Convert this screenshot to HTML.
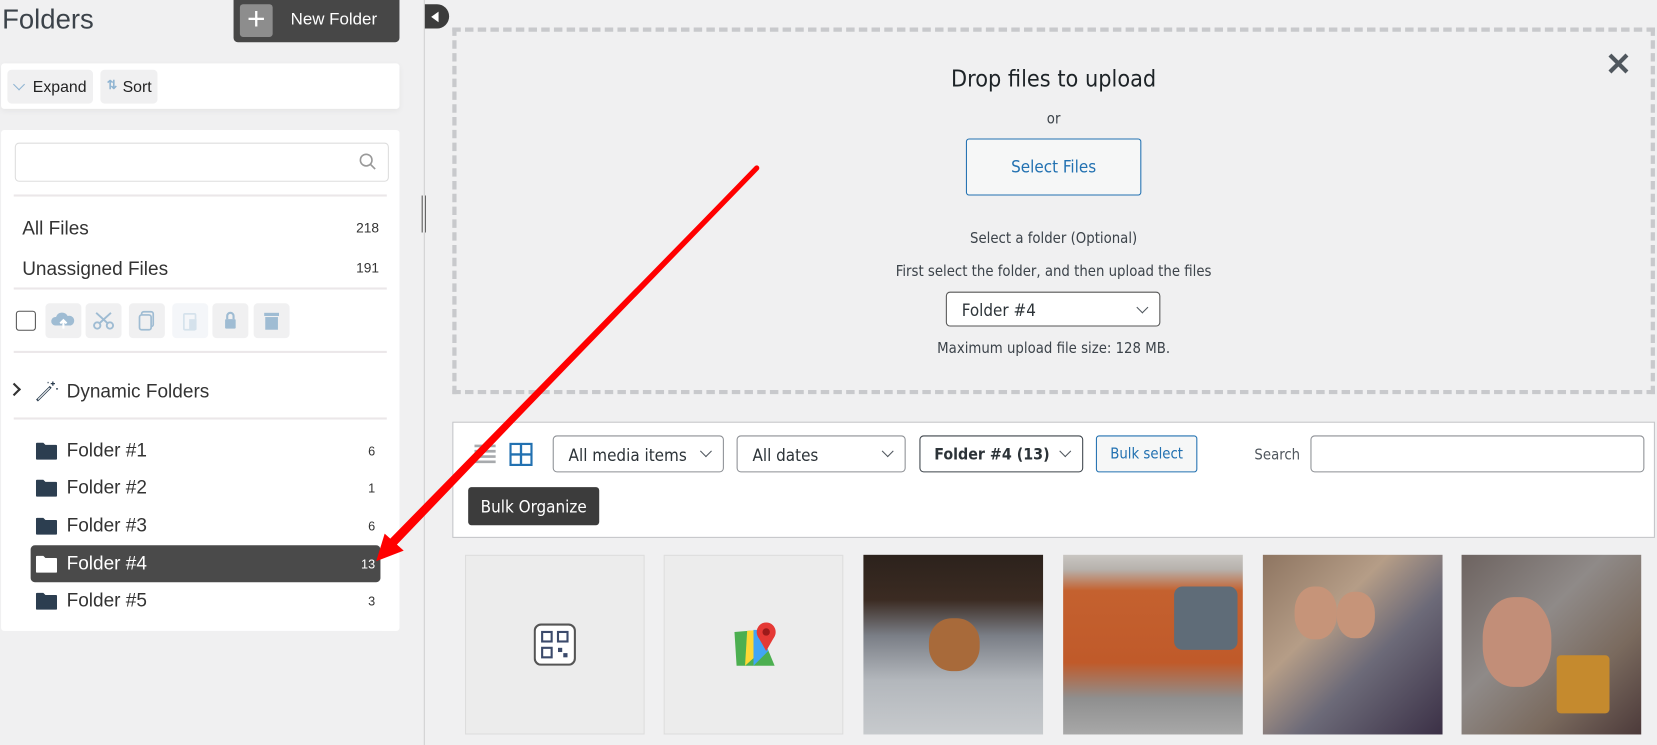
<!DOCTYPE html>
<html><head><meta charset="utf-8"><style>
html,body{margin:0;padding:0;width:1657px;height:745px;overflow:hidden;background:#f0f0f1;}
#w{position:absolute;left:0;top:0;width:1568px;height:705px;transform:scale(1.0568);transform-origin:0 0;font-family:"Liberation Sans",sans-serif;color:#3c434a;}
.a{position:absolute;}
.card{background:#fff;border-radius:3px;}
.hr{position:absolute;height:2px;background:#ebe7e9;}
.ib{position:absolute;top:287px;width:34px;height:33px;background:#f0f0f1;border-radius:4px;}
.fr{position:absolute;left:29px;width:331px;height:35px;}
.fr .t{position:absolute;left:34px;top:7px;font-size:18px;color:#333;}
.fr .n{position:absolute;right:5px;top:11px;font-size:12px;color:#333;}
.fr svg{position:absolute;left:5px;top:9px;}
.sel{position:absolute;height:33px;border:1px solid #8c8f94;border-radius:4px;background:#fff;font-size:16px;font-family:"DejaVu Sans Condensed","Liberation Sans",sans-serif;box-sizing:border-box;padding:8px 14px;color:#2c3338;}
.sel:after{content:"";position:absolute;right:12px;top:10px;width:7px;height:7px;border-right:1.8px solid #50575e;border-bottom:1.8px solid #50575e;transform:rotate(45deg);}
.th{position:absolute;top:525px;width:170px;height:170px;}
.wc{font-family:"DejaVu Sans Condensed","Liberation Sans",sans-serif;}
</style></head><body><div id="w">
<div class="a" style="left:2px;top:3px;font-size:26px;color:#3c434a">Folders</div>
<div class="a" style="left:221px;top:0;width:157px;height:40px;background:#474747;border-radius:0 0 4px 4px"></div>
<div class="a" style="left:227px;top:4px;width:31px;height:31px;background:#8d8d8d;border-radius:3px;color:#fff;font-size:30px;line-height:30px;text-align:center">+</div>
<div class="a" style="left:275px;top:10px;color:#fff;font-size:16px">New Folder</div>

<div class="a card" style="left:1px;top:60px;width:377px;height:43px;box-shadow:0 2px 6px rgba(0,0,0,.05)"></div>
<div class="a" style="left:7px;top:66px;width:81px;height:32px;background:#f0f0f1;border-radius:4px"></div>
<div class="a" style="left:14px;top:76px;width:7px;height:7px;border-right:1.5px solid #8fb4d2;border-bottom:1.5px solid #8fb4d2;transform:rotate(45deg)"></div>
<div class="a" style="left:31px;top:74px;font-size:15px;color:#222">Expand</div>
<div class="a" style="left:95px;top:66px;width:54px;height:32px;background:#f0f0f1;border-radius:4px"></div>
<div class="a" style="left:101px;top:73px;font-size:12px;color:#8fb4d2;font-weight:bold">⇅</div>
<div class="a" style="left:116px;top:74px;font-size:15px;color:#222">Sort</div>

<div class="a card" style="left:1px;top:123px;width:377px;height:474px"></div>
<div class="a" style="left:14px;top:135px;width:352px;height:35px;border:1px solid #ddd;border-radius:4px"></div>
<svg class="a" style="left:339px;top:144px" width="18" height="18"><circle cx="7.5" cy="7.5" r="5.5" fill="none" stroke="#999" stroke-width="1.5"/><path d="M11.5 11.5L16 16" stroke="#999" stroke-width="1.6"/></svg>
<div class="hr" style="left:13px;top:184px;width:353px"></div>
<div class="a" style="left:21px;top:206px;font-size:18px;color:#333">All Files</div>
<div class="a" style="left:337px;top:208px;font-size:13px;color:#333">218</div>
<div class="a" style="left:21px;top:244px;font-size:18px;color:#333">Unassigned Files</div>
<div class="a" style="left:337px;top:246px;font-size:13px;color:#333">191</div>
<div class="hr" style="left:13px;top:272px;width:353px"></div>
<div class="a" style="left:15px;top:294px;width:17px;height:17px;border:1.3px solid #555;border-radius:3px;background:#fff"></div>
<div class="ib" style="left:43px"><svg width="34" height="33"><path d="M9 21a4 4 0 0 1 1-8a6 6 0 0 1 11-1a4.5 4.5 0 0 1 3 9z" fill="#9fbcd3"/><path d="M17 24v-8m-3 3l3-3 3 3" stroke="#fff" stroke-width="2" fill="none"/></svg></div>
<div class="ib" style="left:81px"><svg width="34" height="33"><circle cx="11" cy="21" r="3" fill="none" stroke="#9fbcd3" stroke-width="1.8"/><circle cx="23" cy="21" r="3" fill="none" stroke="#9fbcd3" stroke-width="1.8"/><path d="M13 19L24 9M21 19L10 9" stroke="#9fbcd3" stroke-width="1.8"/></svg></div>
<div class="ib" style="left:122px"><svg width="34" height="33"><rect x="12" y="8" width="11" height="14" rx="2" fill="none" stroke="#9fbcd3" stroke-width="1.6"/><rect x="10" y="11" width="11" height="14" rx="2" fill="#f0f0f1" stroke="#9fbcd3" stroke-width="1.6"/></svg></div>
<div class="ib" style="left:163px;background:#f4f6f9"><svg width="34" height="33"><rect x="11" y="10" width="11" height="15" rx="1" fill="none" stroke="#d5e2ec" stroke-width="1.6"/><rect x="16" y="15" width="7" height="10" fill="#d5e2ec"/></svg></div>
<div class="ib" style="left:201px"><svg width="34" height="33"><rect x="12" y="15" width="10" height="9" rx="1" fill="#9fbcd3"/><path d="M14 15v-3a3 3 0 0 1 6 0v3" fill="none" stroke="#9fbcd3" stroke-width="2"/></svg></div>
<div class="ib" style="left:240px"><svg width="34" height="33"><rect x="10" y="9" width="14" height="3" fill="#9fbcd3"/><rect x="11" y="13" width="12" height="12" fill="#9fbcd3"/></svg></div>
<div class="hr" style="left:13px;top:332px;width:353px"></div>
<div class="a" style="left:9px;top:364px;width:7px;height:7px;border-right:2px solid #333;border-bottom:2px solid #333;transform:rotate(-45deg)"></div>
<svg class="a" style="left:33px;top:359px" width="22" height="22"><path d="M2 20L15 7" stroke="#2c3e50" stroke-width="2.5"/><path d="M3 19L14 8" stroke="#fff" stroke-width="1"/><path d="M17 2v4M15 4h4M20 9h2M12 3h1" stroke="#2c3e50" stroke-width="1.2"/></svg>
<div class="a" style="left:63px;top:360px;font-size:18px;color:#333">Dynamic Folders</div>
<div class="hr" style="left:13px;top:395px;width:353px"></div>

<div class="fr" style="top:409px"><svg width="20" height="17"><path d="M0 2a1 1 0 0 1 1-1h6l2 2h10a1 1 0 0 1 1 1v12a1 1 0 0 1-1 1H1a1 1 0 0 1-1-1z" fill="#2c3e50"/></svg><span class="t">Folder #1</span><span class="n">6</span></div>
<div class="fr" style="top:444px"><svg width="20" height="17"><path d="M0 2a1 1 0 0 1 1-1h6l2 2h10a1 1 0 0 1 1 1v12a1 1 0 0 1-1 1H1a1 1 0 0 1-1-1z" fill="#2c3e50"/></svg><span class="t">Folder #2</span><span class="n">1</span></div>
<div class="fr" style="top:480px"><svg width="20" height="17"><path d="M0 2a1 1 0 0 1 1-1h6l2 2h10a1 1 0 0 1 1 1v12a1 1 0 0 1-1 1H1a1 1 0 0 1-1-1z" fill="#2c3e50"/></svg><span class="t">Folder #3</span><span class="n">6</span></div>
<div class="fr" style="top:516px;background:#4a4a4a;border-radius:4px"><svg width="20" height="17"><path d="M0 2a1 1 0 0 1 1-1h6l2 2h10a1 1 0 0 1 1 1v12a1 1 0 0 1-1 1H1a1 1 0 0 1-1-1z" fill="#fff"/></svg><span class="t" style="color:#fff">Folder #4</span><span class="n" style="color:#fff">13</span></div>
<div class="fr" style="top:551px"><svg width="20" height="17"><path d="M0 2a1 1 0 0 1 1-1h6l2 2h10a1 1 0 0 1 1 1v12a1 1 0 0 1-1 1H1a1 1 0 0 1-1-1z" fill="#2c3e50"/></svg><span class="t">Folder #5</span><span class="n">3</span></div>

<div class="a" style="left:401px;top:0;width:1px;height:705px;background:#d0d0d0"></div>
<div class="a" style="left:399px;top:185px;width:4px;height:35px;border-left:1px solid #555;border-right:1px solid #555;box-sizing:border-box;background:#f0f0f1"></div>
<div class="a" style="left:402px;top:4px;width:23px;height:23px;background:#3c3c3c;border-radius:0 12px 12px 0"></div>
<div class="a" style="left:408px;top:11px;width:0;height:0;border-top:5px solid transparent;border-bottom:5px solid transparent;border-right:7px solid #fff"></div>

<div class="a" style="left:428px;top:26px;width:1138px;height:347px;border:4px dashed #c8c9cc;box-sizing:border-box"></div>
<div class="a" style="left:1519px;top:44px;font-size:30px;color:#50575e;font-weight:bold">✕</div>
<div class="a wc" style="left:697px;width:600px;top:63px;text-align:center;font-size:22px;color:#1d2327">Drop files to upload</div>
<div class="a wc" style="left:697px;width:600px;top:105px;text-align:center;font-size:14px">or</div>
<div class="a wc" style="left:914px;top:131px;width:166px;height:54px;border:1px solid #2271b1;border-radius:3px;background:#f6f7f7;box-sizing:border-box;text-align:center;line-height:52px;font-size:16px;color:#2271b1">Select Files</div>
<div class="a wc" style="left:697px;width:600px;top:218px;text-align:center;font-size:14px">Select a folder (Optional)</div>
<div class="a wc" style="left:697px;width:600px;top:249px;text-align:center;font-size:14px">First select the folder, and then upload the files</div>
<div class="sel" style="left:895px;top:276px;width:203px;border-color:#555;padding:7px 14px">Folder #4</div>
<div class="a wc" style="left:697px;width:600px;top:322px;text-align:center;font-size:14px">Maximum upload file size: 128 MB.</div>

<div class="a" style="left:428px;top:399px;width:1138px;height:110px;background:#fff;border:1px solid #c3c4c7;box-sizing:border-box"></div>
<svg class="a" style="left:448px;top:419px" width="22" height="22"><path d="M1 3h20M1 8h20M1 13h20M1 18h20" stroke="#a7aaad" stroke-width="2.5"/></svg>
<svg class="a" style="left:482px;top:419px" width="22" height="22"><rect x="1" y="1" width="20" height="20" fill="none" stroke="#2271b1" stroke-width="2.2"/><path d="M11 1v20M1 11h20" stroke="#2271b1" stroke-width="2.2"/></svg>
<div class="sel" style="left:523px;top:412px;width:162px;height:35px">All media items</div>
<div class="sel" style="left:697px;top:412px;width:160px;height:35px">All dates</div>
<div class="sel" style="left:870px;top:412px;width:155px;height:35px;border-color:#3c434a;font-weight:bold;padding-left:13px;font-size:15px">Folder #4 (13)</div>
<div class="a wc" style="left:1037px;top:412px;width:96px;height:35px;border:1px solid #2271b1;border-radius:3px;background:#f6f7f7;box-sizing:border-box;text-align:center;line-height:35px;font-size:14px;color:#2271b1">Bulk select</div>
<div class="a wc" style="left:1187px;top:423px;font-size:14px;color:#50575e">Search</div>
<div class="a" style="left:1240px;top:412px;width:316px;height:35px;border:1px solid #8c8f94;border-radius:4px;box-sizing:border-box"></div>
<div class="a wc" style="left:443px;top:461px;width:124px;height:36px;background:#3c3c3c;border-radius:3px;color:#fff;font-size:16px;text-align:center;line-height:37px">Bulk Organize</div>

<div class="th" style="left:440px;background:#ececec;border:1px solid #ddd;box-sizing:border-box"><svg style="position:absolute;left:64px;top:64px" width="40" height="40"><rect x="1" y="1" width="38" height="38" rx="6" fill="#fff" stroke="#555" stroke-width="2"/><rect x="8" y="8" width="9" height="9" fill="none" stroke="#3b4a6b" stroke-width="2"/><rect x="23" y="8" width="9" height="9" fill="none" stroke="#3b4a6b" stroke-width="2"/><rect x="8" y="23" width="9" height="9" fill="none" stroke="#3b4a6b" stroke-width="2"/><rect x="23" y="23" width="4" height="4" fill="#3b4a6b"/><rect x="28" y="28" width="4" height="4" fill="#3b4a6b"/></svg></div>
<div class="th" style="left:628px;background:#ececec;border:1px solid #ddd;box-sizing:border-box"><svg style="position:absolute;left:64px;top:60px" width="44" height="46"><path d="M2 12l24-2 14 34H4z" fill="#4caf50"/><path d="M14 11l12-1 6 16-20 18z" fill="#fdd835"/><path d="M20 10l6 0 8 20-14 14z" fill="#42a5f5"/><circle cx="32" cy="12" r="9" fill="#e53935"/><circle cx="32" cy="12" r="3.5" fill="#9c1a1a"/><path d="M24 16l8 14 8-14" fill="#e53935"/></svg></div>
<div class="th" style="left:817px;background:linear-gradient(180deg,#2c221c 0%,#3b2b22 25%,#7a7e86 45%,#b3b7bc 70%,#c7cacd 100%)"><div class="a" style="left:62px;top:60px;width:48px;height:50px;border-radius:45%;background:#a86a3a"></div></div>
<div class="th" style="left:1006px;background:linear-gradient(180deg,#c9c6c2 0%,#b7b2ad 8%,#c4612f 20%,#c05a2a 60%,#8f8f8f 80%,#a8a8a8 100%)"><div class="a" style="left:105px;top:30px;width:60px;height:60px;background:#5f6c78;border-radius:8px"></div></div>
<div class="th" style="left:1195px;background:linear-gradient(135deg,#8e7561 0%,#b59d87 35%,#6c6a78 60%,#3b3046 100%)"><div class="a" style="left:30px;top:30px;width:40px;height:50px;border-radius:45%;background:#c69479"></div><div class="a" style="left:70px;top:35px;width:36px;height:44px;border-radius:45%;background:#c69479"></div></div>
<div class="th" style="left:1383px;background:linear-gradient(135deg,#6d6360 0%,#8f8a88 40%,#7a6a5e 70%,#4c3a3a 100%)"><div class="a" style="left:20px;top:40px;width:65px;height:85px;border-radius:45%;background:#c28e78"></div><div class="a" style="left:90px;top:95px;width:50px;height:55px;background:#c58a2e;border-radius:4px"></div></div>

<svg class="a" style="left:0;top:0" width="1568" height="705"><polygon points="714,158 716,160 374,517 368,511" fill="#ff0000"/><polygon points="356,531 364,505 382,521" fill="#ff0000"/><path d="M716,159 L368,518" stroke="#ff0000" stroke-width="5" stroke-linecap="round"/></svg>
</div></body></html>
